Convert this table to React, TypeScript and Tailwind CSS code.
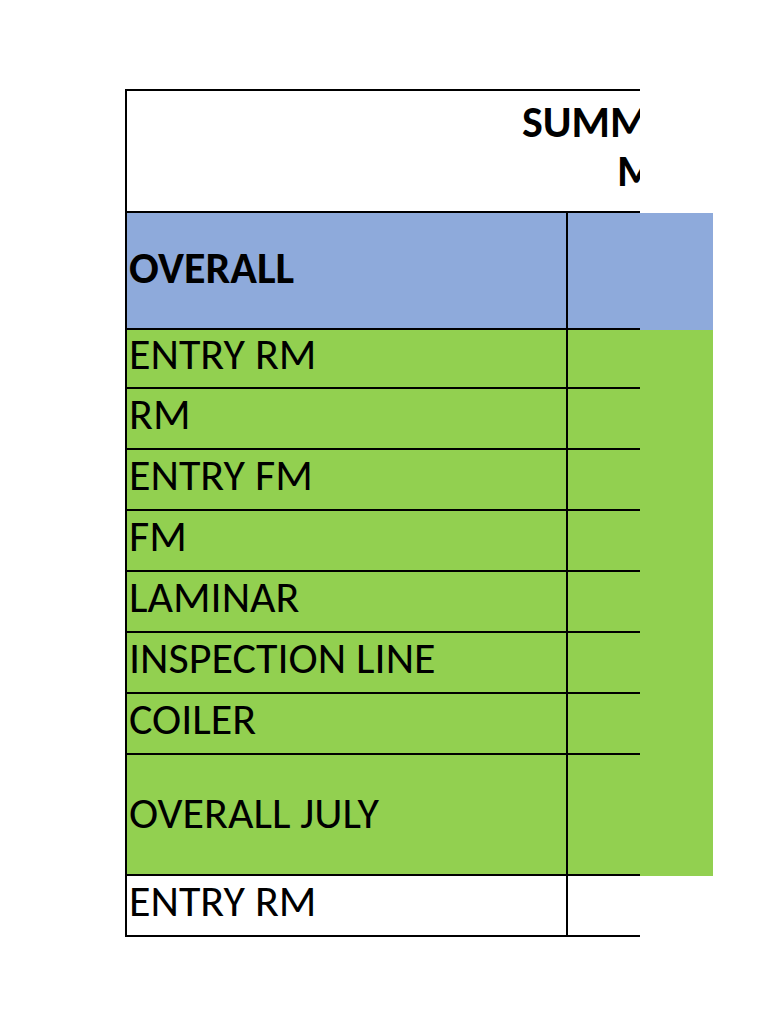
import React from "react";

type RowProps = {
  label: string;
  h: string;
  bg: string;
  ext: string;
  text: string;
};

function Row({ label, h, bg, ext, text }: RowProps) {
  return (
    <div className={`flex ${h}`}>
      <div className={`flex w-[515px] border-b-2 border-l-2 border-black ${bg}`}>
        <div className={`flex w-[439px] items-center whitespace-nowrap pl-[2px] ${text}`}>{label}</div>
        <div className="w-[74px] border-l-2 border-black" />
      </div>
      <div className={`w-[73px] ${ext}`} />
    </div>
  );
}

const green = "bg-[#92d050]";
const std = "pb-[9px] text-[44px] leading-[44px]";

const rows: { label: string; h: string; bg: string; ext: string; text: string }[] = [
  { label: "ENTRY RM", h: "h-[59px]", bg: green, ext: green, text: std },
  { label: "RM", h: "h-[61px]", bg: green, ext: green, text: std },
  { label: "ENTRY FM", h: "h-[61px]", bg: green, ext: green, text: std },
  { label: "FM", h: "h-[61px]", bg: green, ext: green, text: std },
  { label: "LAMINAR", h: "h-[61px]", bg: green, ext: green, text: std },
  { label: "INSPECTION LINE", h: "h-[61px]", bg: green, ext: green, text: std },
  { label: "COILER", h: "h-[61px]", bg: green, ext: green, text: std },
  { label: "OVERALL JULY", h: "h-[121px]", bg: green, ext: green, text: "pb-[3px] text-[44px] leading-[44px]" },
  { label: "ENTRY RM", h: "h-[61px]", bg: "bg-white", ext: "bg-white", text: std },
];

export default function App() {
  return (
    <div className="min-h-screen bg-white pl-[125px] pt-[89px] text-black [font-family:Carlito,Calibri,'Open_Sans',sans-serif]">
      <div className="flex w-[588px] flex-col">
        <div className="flex h-[124px]">
          <div className="w-[515px] overflow-hidden border-y-2 border-l-2 border-black pt-[7px] text-[44px] font-bold leading-[49px] whitespace-nowrap">
            <div className="pl-[395px]">SUMMARY OF DELAYS</div>
            <div className="pl-[490px]">MONTH WISE</div>
          </div>
          <div className="w-[73px] bg-white" />
        </div>
        <Row
          label="OVERALL"
          h="h-[117px]"
          bg="bg-[#8eaadb]"
          ext="bg-[#8eaadb]"
          text="pb-[6px] text-[44px] font-bold leading-[44px]"
        />
        {rows.map((r, i) => (
          <Row key={i} {...r} />
        ))}
      </div>
    </div>
  );
}
